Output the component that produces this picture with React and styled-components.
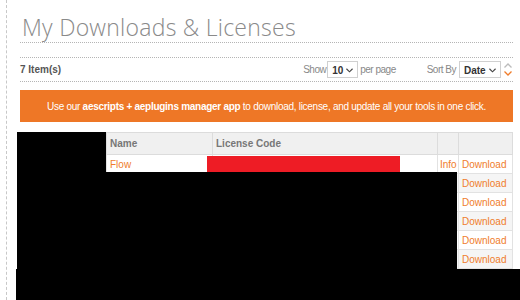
import React from "react";
import styled, { createGlobalStyle } from "styled-components";

const Global = createGlobalStyle`
  html, body { margin: 0; padding: 0; background: #fff; overflow: hidden; }
  body { font-family: "Liberation Sans", Arial, sans-serif; }
`;

const Page = styled.div`
  margin-left: 6px;
  padding-top: 12px;
  border-left: 1px dashed #c8c8c8;
  padding-left: 13px;
  width: 493px;
  height: 288px;
`;

const TitleBar = styled.div`
  height: 30px;
  border-bottom: 1px dotted #b5b5b5;
  padding-left: 2px;
`;

const Title = styled.h1`
  margin: 0;
  font-family: "Open Sans", sans-serif;
  font-weight: 300;
  font-size: 23px;
  line-height: 30px;
  color: #8a8a8a;
  letter-spacing: 0.25px;
`;

const Divider = styled.div`
  height: 14px;
  border-bottom: 1px dotted #b5b5b5;
`;

const Toolbar = styled.div`
  display: flex;
  align-items: center;
  height: 23px;
  padding-right: 1px;
  border-bottom: 1px dotted #b5b5b5;
  font-size: 10px;
  color: #888;
`;

const Count = styled.span`
  font-weight: bold;
  color: #555;
  flex: 1;
`;

const Control = styled.div`
  display: flex;
  align-items: center;
  letter-spacing: -0.5px;
  margin-right: ${(p) => p.$mr || 0}px;
`;

const SelectBox = styled.div`
  display: flex;
  align-items: center;
  justify-content: space-between;
  box-sizing: border-box;
  width: ${(p) => p.$w}px;
  height: 17px;
  border: 1px solid #d0d0d0;
  background: #fff;
  padding: 1px 4px 0 4px;
  font-size: 10px;
  font-weight: bold;
  letter-spacing: 0;
  color: #333;
  margin: 0 2px 0 ${(p) => p.$ml ?? 2}px;
`;

const SortArrows = styled.div`
  display: flex;
  flex-direction: column;
  margin-left: 1px;
  gap: 3px;
`;

const Banner = styled.div`
  margin-top: 8px;
  height: 32px;
  background: #ee7726;
  color: #fff;
  font-size: 10px;
  letter-spacing: -0.28px;
  white-space: nowrap;
  display: flex;
  align-items: center;
  justify-content: center;
  b { font-weight: bold; }
`;

const TableWrap = styled.div`
  position: relative;
  margin-top: 10px;
  margin-left: -3px;
  width: 495px;
`;

const Table = styled.table`
  border-collapse: collapse;
  width: 495px;
  table-layout: fixed;
  font-size: 10px;
`;

const Th = styled.th`
  background: #f0f0f0;
  border: 1px solid #dcdcdc;
  height: 21px;
  padding: 0 3px;
  text-align: left;
  color: #777;
  font-weight: bold;
`;

const Tr = styled.tr`
  background: ${(p) => (p.$alt ? "#f5f5f5" : "#fff")};
`;

const Td = styled.td`
  border: 1px solid #e2e2e2;
  height: ${(p) => p.$h || 18}px;
  padding: 0 ${(p) => p.$px ?? 3}px;
  color: #f07d2c;
  white-space: nowrap;
  overflow: visible;
`;

const Redact = styled.div`
  position: absolute;
  background: ${(p) => p.$c || "#000"};
`;

const Chevron = ({ up, color, w = 8 }) => (
  <svg width={w} height="5" viewBox="0 0 8 5">
    <path
      d={up ? "M0.5 4.5 L4 1 L7.5 4.5" : "M0.5 0.5 L4 4 L7.5 0.5"}
      fill="none"
      stroke={color}
      strokeWidth="1.3"
    />
  </svg>
);

const rows = [
  { name: "Flow", info: true },
  {}, {}, {}, {}, {}, {},
];

export default function App() {
  return (
    <>
      <Global />
      <Page>
        <TitleBar>
          <Title>My Downloads &amp; Licenses</Title>
        </TitleBar>
        <Divider />
        <Toolbar>
          <Count>7 Item(s)</Count>
          <Control $mr={31}>
            Show
            <SelectBox $w={31} $ml={1}>
              10 <Chevron color="#444" w={7} />
            </SelectBox>
            per page
          </Control>
          <Control>
            Sort By
            <SelectBox $w={42} $ml={3}>
              Date <Chevron color="#444" w={7} />
            </SelectBox>
          </Control>
          <SortArrows>
            <Chevron up color="#bbb" />
            <Chevron color="#f07d2c" />
          </SortArrows>
        </Toolbar>
        <Banner>
          <span>
            Use our <b>aescripts + aeplugins manager app</b> to download, license, and update all your tools in one click.
          </span>
        </Banner>
        <TableWrap>
          <Table>
            <colgroup>
              <col style={{ width: 89 }} />
              <col style={{ width: 106 }} />
              <col style={{ width: 225 }} />
              <col style={{ width: 21 }} />
              <col style={{ width: 54 }} />
            </colgroup>
            <thead>
              <tr>
                <Th></Th>
                <Th>Name</Th>
                <Th>License Code</Th>
                <Th></Th>
                <Th></Th>
              </tr>
            </thead>
            <tbody>
              {rows.map((r, i) => (
                <Tr key={i} $alt={i % 2 === 1}>
                  <Td $h={i === 0 ? 15 : 18}></Td>
                  <Td>{r.name || ""}</Td>
                  <Td></Td>
                  <Td $px={2}>{r.info ? "Info" : ""}</Td>
                  <Td>Download</Td>
                </Tr>
              ))}
            </tbody>
          </Table>
          <Redact style={{ left: 0, top: 0, width: 89, height: 40 }} />
          <Redact $c="#ee1c25" style={{ left: 190, top: 24, width: 193, height: 16 }} />
          <Redact style={{ left: 0, top: 40, width: 440, height: 97 }} />
          <Redact style={{ left: -1, top: 137, width: 510, height: 40 }} />
        </TableWrap>
      </Page>
    </>
  );
}
